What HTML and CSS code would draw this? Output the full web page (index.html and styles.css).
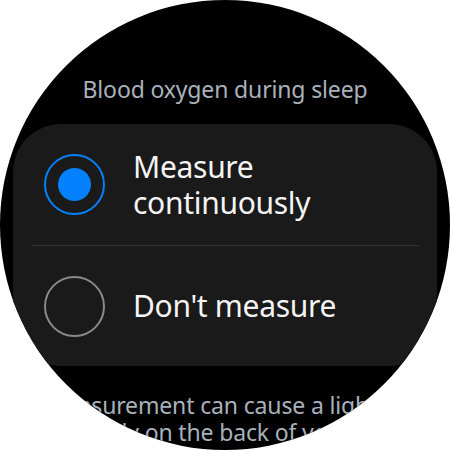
FILE: index.html
```html
<!DOCTYPE html>
<html>
<head>
<meta charset="utf-8">
<link rel="stylesheet" href="styles.css">
</head>
<body>
<div class="watch">
  <div class="title">Blood oxygen during sleep</div>
  <div class="card">
    <div class="row">
      <span class="radio on"><span class="dot"></span></span>
      <span class="label">Measure<br>continuously</span>
    </div>
    <div class="divider"></div>
    <div class="row">
      <span class="radio"></span>
      <span class="label">Don't measure</span>
    </div>
  </div>
  <div class="note">Measurement can cause a light to<br>glow dimly on the back of your watch.</div>
</div>
</body>
</html>
```

FILE: styles.css
```css
html, body {
  margin: 0;
  padding: 0;
  background: #ffffff;
}
.watch {
  width: 450px;
  height: 450px;
  border-radius: 50%;
  background: #000000;
  overflow: hidden;
  display: flex;
  flex-direction: column;
  font-family: "Noto Sans", "Open Sans", sans-serif;
}
.title {
  box-sizing: border-box;
  height: 124px;
  padding-top: 74px;
  text-align: center;
  font-size: 23px;
  line-height: 30px;
  color: #a8b2bb;
  letter-spacing: -0.15px;
}
.card {
  margin: 0 13px;
  background: #1a1a1a;
  border-radius: 48px;
  flex-shrink: 0;
}
.row {
  height: 121px;
  display: flex;
  align-items: center;
  padding-left: 31px;
  gap: 28px;
}
.row + .divider + .row {
  height: 120px;
}
.divider {
  height: 1px;
  background: #333333;
  margin: 0 18px;
}
.radio {
  width: 61px;
  height: 61px;
  box-sizing: border-box;
  border-radius: 50%;
  border: 2px solid #8a8a8a;
  display: flex;
  align-items: center;
  justify-content: center;
  flex-shrink: 0;
}
.radio.on {
  border: 2.5px solid #0381fe;
}
.dot {
  width: 33px;
  height: 33px;
  border-radius: 50%;
  background: #0381fe;
}
.label {
  font-size: 30px;
  line-height: 36px;
  color: #f4f4f4;
  letter-spacing: -0.3px;
}
.note {
  margin-top: 26px;
  text-align: center;
  font-size: 23px;
  line-height: 27px;
  color: #a8b2bb;
  letter-spacing: -0.15px;
}
```
